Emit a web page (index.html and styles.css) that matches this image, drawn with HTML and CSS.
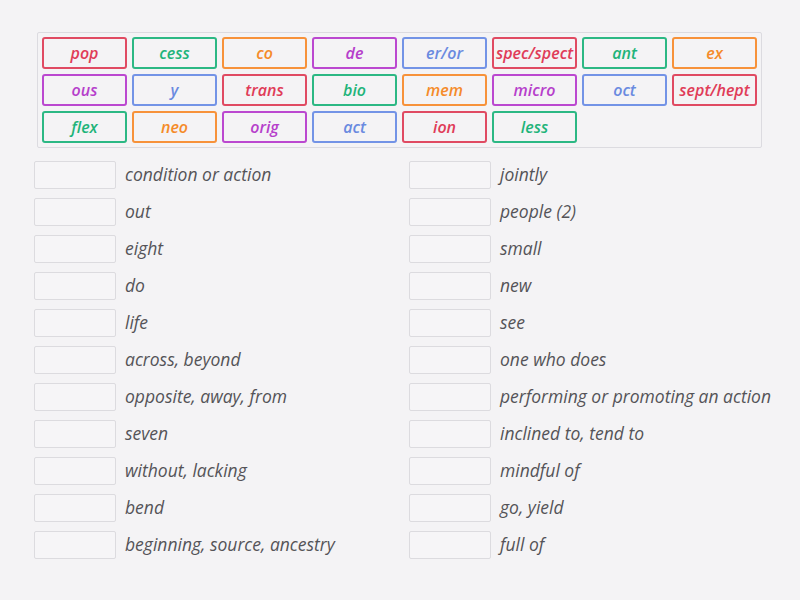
FILE: index.html
```html
<!DOCTYPE html>
<html>
<head>
<meta charset="utf-8">
<link rel="stylesheet" href="styles.css">
</head>
<body>
<div class="tiles">
  <div class="tile red">pop</div>
  <div class="tile green">cess</div>
  <div class="tile orange">co</div>
  <div class="tile purple">de</div>
  <div class="tile blue">er/or</div>
  <div class="tile red">spec/spect</div>
  <div class="tile green">ant</div>
  <div class="tile orange">ex</div>
  <div class="tile purple">ous</div>
  <div class="tile blue">y</div>
  <div class="tile red">trans</div>
  <div class="tile green">bio</div>
  <div class="tile orange">mem</div>
  <div class="tile purple">micro</div>
  <div class="tile blue">oct</div>
  <div class="tile red">sept/hept</div>
  <div class="tile green">flex</div>
  <div class="tile orange">neo</div>
  <div class="tile purple">orig</div>
  <div class="tile blue">act</div>
  <div class="tile red">ion</div>
  <div class="tile green">less</div>
</div>
<div class="list">
  <div class="col">
    <div class="row"><div class="slot"></div><span class="def">condition or action</span></div>
    <div class="row"><div class="slot"></div><span class="def">out</span></div>
    <div class="row"><div class="slot"></div><span class="def">eight</span></div>
    <div class="row"><div class="slot"></div><span class="def">do</span></div>
    <div class="row"><div class="slot"></div><span class="def">life</span></div>
    <div class="row"><div class="slot"></div><span class="def">across, beyond</span></div>
    <div class="row"><div class="slot"></div><span class="def">opposite, away, from</span></div>
    <div class="row"><div class="slot"></div><span class="def">seven</span></div>
    <div class="row"><div class="slot"></div><span class="def">without, lacking</span></div>
    <div class="row"><div class="slot"></div><span class="def">bend</span></div>
    <div class="row"><div class="slot"></div><span class="def">beginning, source, ancestry</span></div>
  </div>
  <div class="col">
    <div class="row"><div class="slot"></div><span class="def">jointly</span></div>
    <div class="row"><div class="slot"></div><span class="def">people (2)</span></div>
    <div class="row"><div class="slot"></div><span class="def">small</span></div>
    <div class="row"><div class="slot"></div><span class="def">new</span></div>
    <div class="row"><div class="slot"></div><span class="def">see</span></div>
    <div class="row"><div class="slot"></div><span class="def">one who does</span></div>
    <div class="row"><div class="slot"></div><span class="def">performing or promoting an action</span></div>
    <div class="row"><div class="slot"></div><span class="def">inclined to, tend to</span></div>
    <div class="row"><div class="slot"></div><span class="def">mindful of</span></div>
    <div class="row"><div class="slot"></div><span class="def">go, yield</span></div>
    <div class="row"><div class="slot"></div><span class="def">full of</span></div>
  </div>
</div>
</body>
</html>
```
FILE: styles.css
```css
html, body {
  margin: 0;
  padding: 0;
  background: #f4f3f5;
  font-family: "Open Sans", "DejaVu Sans", sans-serif;
  font-style: italic;
}
body {
  width: 800px;
  height: 600px;
  overflow: hidden;
}
.tiles {
  margin: 32px 0 0 37px;
  width: 715px;
  padding: 4px;
  border: 1px solid #dcdbe0;
  border-radius: 2px;
  display: grid;
  grid-template-columns: repeat(8, 85px);
  grid-auto-rows: 32px;
  gap: 5px;
}
.tile {
  box-sizing: border-box;
  border: 2px solid;
  border-radius: 3px;
  display: flex;
  align-items: center;
  justify-content: center;
  font-size: 16px;
  font-weight: 600;
}
.red { color: #e03c58; border-color: #e04a62; }
.green { color: #1fb47a; border-color: #2cb884; }
.orange { color: #f58b2a; border-color: #f7923a; }
.purple { color: #b63fcb; border-color: #bb48d0; }
.blue { color: #6a8ae0; border-color: #7393e6; }
.list {
  display: flex;
  margin: 13px 0 0 34px;
}
.col {
  width: 375px;
  display: flex;
  flex-direction: column;
  gap: 9px;
}
.row {
  display: flex;
  align-items: center;
  height: 28px;
  gap: 9px;
}
.slot {
  box-sizing: border-box;
  width: 82px;
  height: 28px;
  border: 1px solid #dcdbdf;
  border-radius: 2px;
  background: #f6f5f7;
}
.def {
  font-size: 17.5px;
  font-weight: 500;
  color: #545358;
  white-space: nowrap;
  margin-bottom: 3px;
}
```
